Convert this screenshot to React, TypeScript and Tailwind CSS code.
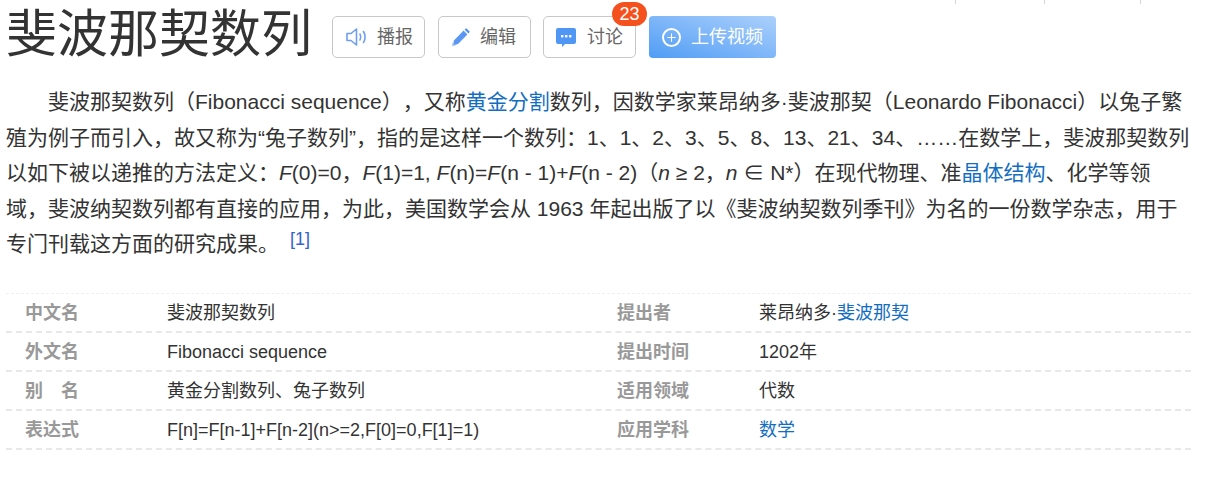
import { Plus } from 'lucide-react';

const LINK = 'text-[#136ec2]';
const CJK = "font-['Liberation_Sans','Noto_Sans_CJK_SC',sans-serif]";

function SpeakerIcon() {
  return (
    <svg width="22" height="22" viewBox="0 0 22 22" fill="none" stroke="#6d9eef" strokeWidth="1.6" strokeLinejoin="round" strokeLinecap="round">
      <path d="M2 7.5h4L11.5 3v16L6 14.5H2z" />
      <path d="M15 8c1 2 1 4 0 6" />
      <path d="M18.5 5.5c2 3.5 2 7.5 0 11" />
    </svg>
  );
}

function PencilIcon() {
  return (
    <svg width="20" height="20" viewBox="0 0 20 20">
      <path d="M13.6 2.6l1.7-1.4 3.5 3.5-1.4 1.7z" fill="#4f8ff0" />
      <path d="M12.6 3.6l3.8 3.8L7 17 2 18.4l.9-5z" fill="#5b97f2" />
      <path d="M1.6 15.5L1 19l3.6-.6z" fill="#9cc0f7" />
    </svg>
  );
}

function ChatIcon() {
  return (
    <svg width="20" height="20" viewBox="0 0 20 20">
      <path d="M2 1h16a2 2 0 0 1 2 2v12a2 2 0 0 1-2 2H9l-3 3v-3H2a2 2 0 0 1-2-2V3a2 2 0 0 1 2-2z" fill="#4f96f5" />
      <rect x="5" y="8" width="2.4" height="2.4" fill="#fff" />
      <rect x="9" y="8" width="2.4" height="2.4" fill="#fff" />
      <rect x="13" y="8" width="2.4" height="2.4" fill="#fff" />
    </svg>
  );
}

function ActionButton({ icon, label, gap }: { icon: React.ReactNode; label: string; gap: string }) {
  return (
    <div className={`flex h-[42px] w-[93px] items-center rounded-[5px] border border-[#c8c8c8] bg-white pl-[12px] text-[18px] text-[#666] ${gap}`}>
      {icon}
      <span>{label}</span>
    </div>
  );
}

const rows = [
  { a: '中文名', b: '斐波那契数列', c: '提出者', d: <>莱昂纳多·<span className={LINK}>斐波那契</span></> },
  { a: '外文名', b: 'Fibonacci sequence', c: '提出时间', d: '1202年' },
  { a: '别\u3000名', b: '黄金分割数列、兔子数列', c: '适用领域', d: '代数' },
  { a: '表达式', b: 'F[n]=F[n-1]+F[n-2](n>=2,F[0]=0,F[1]=1)', c: '应用学科', d: <span className={LINK}>数学</span> },
];

export default function App() {
  return (
    <div className={`relative h-[499px] w-[1207px] overflow-hidden bg-white pl-[6px] text-[#333] ${CJK}`}>
      {/* traces of the nav above */}
      <div className="absolute left-[955px] top-0 h-[4px] w-px bg-[#cfd6de]" />
      <div className="absolute left-[1044px] top-0 h-[4px] w-px bg-[#cfd6de]" />
      <div className="absolute left-[1140px] top-0 h-[4px] w-px bg-[#cfd6de]" />

      <div className="flex items-start pt-[5px]">
        <h1 className="h-[64px] w-[326px] text-[51px] leading-[60px] font-normal whitespace-nowrap">斐波那契数列</h1>
        <div className="mt-[11px] flex">
          <ActionButton icon={<SpeakerIcon />} label="播报" gap="gap-[10px]" />
          <div className="ml-[13px]">
            <ActionButton icon={<PencilIcon />} label="编辑" gap="gap-[9px]" />
          </div>
          <div className="relative ml-[12px]">
            <ActionButton icon={<ChatIcon />} label="讨论" gap="gap-[11px]" />
            <span className="absolute -top-[14px] left-[69px] flex h-[24px] w-[35px] items-center justify-center rounded-full bg-[#f4511e] text-[18px] font-medium text-white">23</span>
          </div>
          <div className="ml-[13px] flex h-[42px] w-[127px] items-center gap-[10px] rounded-[4px] bg-linear-to-tr from-[#4f9cf5] to-[#abd0fb] pl-[13px] text-[18px] text-white">
            <span className="flex h-[19px] w-[19px] items-center justify-center rounded-full border-2 border-white">
              <Plus size={13} strokeWidth={2} />
            </span>
            <span>上传视频</span>
          </div>
        </div>
      </div>

      <p className="mt-[15px] w-[1190px] indent-[42px] text-[21px] leading-[35.5px] whitespace-nowrap [text-spacing-trim:space-all]">
        斐波那契数列（Fibonacci sequence），又称<span className={LINK}>黄金分割</span>数列，因数学家莱昂纳多·斐波那契（Leonardo Fibonacci）以兔子繁
        <br />
        殖为例子而引入，故又称为“兔子数列”，指的是这样一个数列：1、1、2、3、5、8、13、21、34、……在数学上，斐波那契数列
        <br />
        以如下被以递推的方法定义：<i>F</i>(0)=0，<i>F</i>(1)=1, <i>F</i>(n)=<i>F</i>(n - 1)+<i>F</i>(n - 2)（<i>n</i> ≥ 2，<i>n</i> ∈ N*）在现代物理、准<span className={LINK}>晶体结构</span>、化学等领
        <br />
        域，斐波纳契数列都有直接的应用，为此，美国数学会从 1963 年起出版了以《斐波纳契数列季刊》为名的一份数学杂志，用于
        <br />
        专门刊载这方面的研究成果。
        <sup className="relative -top-[6px] ml-[11px] align-baseline text-[18px] text-[#3366cc]">[1]</sup>
      </p>

      <div className="mt-[31px] w-[1185px] border-t border-dashed border-[#f0f0f0] text-[18px]">
        {rows.map((row) => (
          <div key={row.a} className="flex h-[39px] items-center border-b-2 border-dashed border-[#e8e8e8] pt-[2px] pl-[19px]">
            <span className="w-[142px] font-bold text-[#999]">{row.a}</span>
            <span className="w-[450px]">{row.b}</span>
            <span className="w-[142px] font-bold text-[#999]">{row.c}</span>
            <span>{row.d}</span>
          </div>
        ))}
      </div>
    </div>
  );
}
